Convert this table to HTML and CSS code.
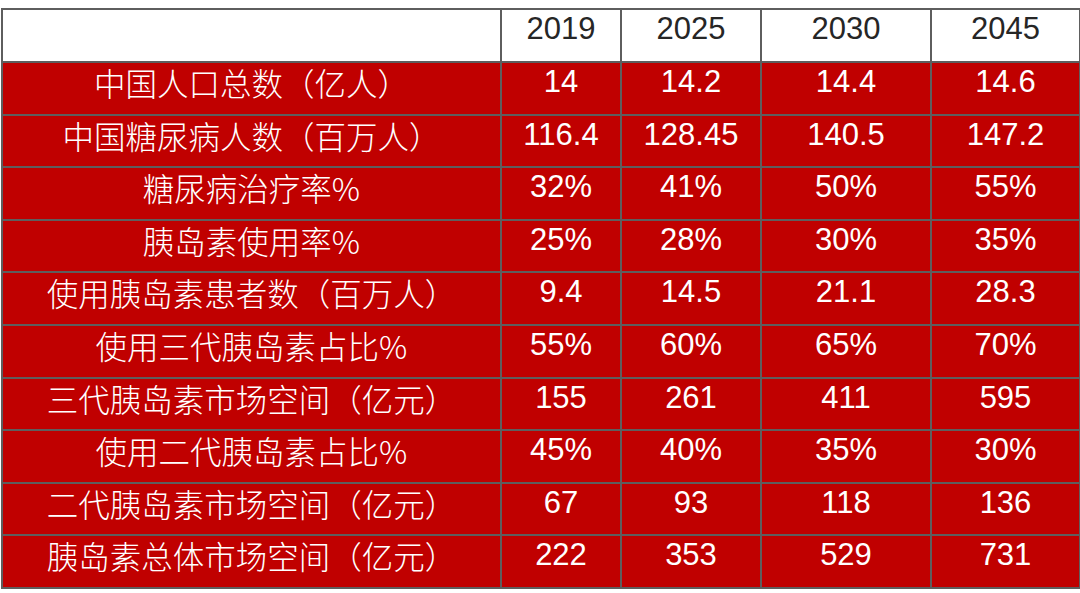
FILE: index.html
```html
<!DOCTYPE html>
<html lang="zh-CN">
<head>
<meta charset="utf-8">
<link rel="stylesheet" href="styles.css">
</head>
<body>
<table class="data">
  <colgroup>
    <col class="c-label"><col class="c-2019"><col class="c-2025"><col class="c-2030"><col class="c-2045">
  </colgroup>
  <thead>
    <tr class="head"><th></th><th>2019</th><th>2025</th><th>2030</th><th>2045</th></tr>
  </thead>
  <tbody>
    <tr><td class="label">中国人口总数（亿人）</td><td>14</td><td>14.2</td><td>14.4</td><td>14.6</td></tr>
    <tr><td class="label">中国糖尿病人数（百万人）</td><td>116.4</td><td>128.45</td><td>140.5</td><td>147.2</td></tr>
    <tr><td class="label">糖尿病治疗率%</td><td>32%</td><td>41%</td><td>50%</td><td>55%</td></tr>
    <tr><td class="label">胰岛素使用率%</td><td>25%</td><td>28%</td><td>30%</td><td>35%</td></tr>
    <tr><td class="label">使用胰岛素患者数（百万人）</td><td>9.4</td><td>14.5</td><td>21.1</td><td>28.3</td></tr>
    <tr><td class="label">使用三代胰岛素占比%</td><td>55%</td><td>60%</td><td>65%</td><td>70%</td></tr>
    <tr><td class="label">三代胰岛素市场空间（亿元）</td><td>155</td><td>261</td><td>411</td><td>595</td></tr>
    <tr><td class="label">使用二代胰岛素占比%</td><td>45%</td><td>40%</td><td>35%</td><td>30%</td></tr>
    <tr><td class="label">二代胰岛素市场空间（亿元）</td><td>67</td><td>93</td><td>118</td><td>136</td></tr>
    <tr><td class="label">胰岛素总体市场空间（亿元）</td><td>222</td><td>353</td><td>529</td><td>731</td></tr>
  </tbody>
</table>
</body>
</html>
```

FILE: styles.css
```css
html, body {
  margin: 0;
  padding: 0;
  background: #ffffff;
}

body {
  padding: 8px 0 0 1px;
  font-family: "Liberation Sans", "Noto Sans CJK SC", Arial, sans-serif;
}

.data {
  width: 1078px;
  border-collapse: collapse;
  table-layout: fixed;
}

.c-label { width: 499px; }
.c-2019 { width: 120px; }
.c-2025 { width: 140px; }
.c-2030 { width: 170px; }
.c-2045 { width: 149px; }

.data th,
.data td {
  border: 2px solid #5e5e5e;
  padding: 2px 0 0 0;
  vertical-align: top;
  text-align: center;
  font-size: 31px;
  line-height: 34px;
  font-weight: normal;
  white-space: nowrap;
  box-sizing: border-box;
}

.data .head th {
  height: 53px;
  background: #ffffff;
  color: #262626;
}

.data tbody tr {
  height: 52.6px;
}

.data tbody td {
  background: #c00000;
  color: #ffffff;
}

.data tbody td.label {
  font-family: "Noto Sans CJK SC", "Liberation Sans", sans-serif;
  font-size: 31.5px;
  font-weight: 300;
  padding-top: 2px;
}
```
